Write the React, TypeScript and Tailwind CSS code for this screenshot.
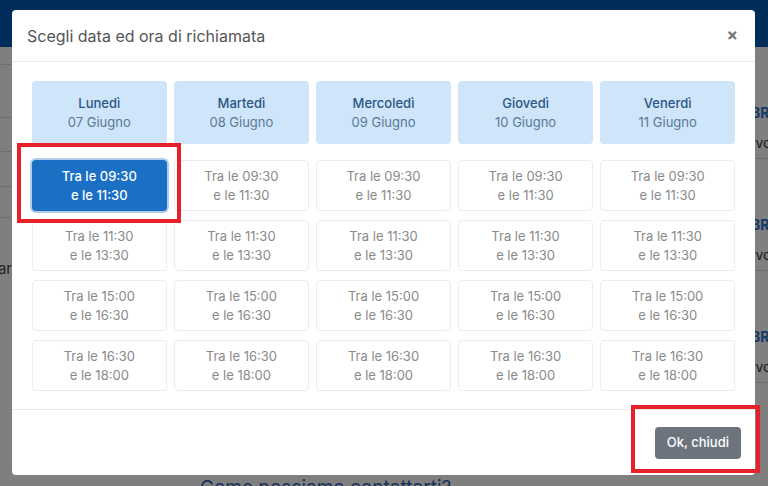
import React from "react";

const days = [
  { name: "Lunedì", date: "07 Giugno" },
  { name: "Martedì", date: "08 Giugno" },
  { name: "Mercoledì", date: "09 Giugno" },
  { name: "Giovedì", date: "10 Giugno" },
  { name: "Venerdì", date: "11 Giugno" },
];

const slots = [
  ["09:30", "11:30"],
  ["11:30", "13:30"],
  ["15:00", "16:30"],
  ["16:30", "18:00"],
];

function Slot({ from, to, selected }: { from: string; to: string; selected?: boolean }) {
  if (selected) {
    return (
      <button className="h-[51px] rounded bg-[#1b6fc4] text-[13px] leading-[19px] font-medium text-white ring-2 ring-[#1b6fc4]/35">
        Tra le {from}
        <br />e le {to}
      </button>
    );
  }
  return (
    <button className="h-[51px] rounded border border-[#ececec] bg-white text-[13px] leading-[19px] text-[#8a8a8a]">
      Tra le {from}
      <br />e le {to}
    </button>
  );
}

export default function App() {
  return (
    <div
      className="relative h-[486px] w-[768px] overflow-hidden bg-white"
      style={{ fontFamily: "Inter, 'Noto Sans', sans-serif" }}
    >
      {/* pagina sotto il modale */}
      <div className="h-[47px] bg-[#035bb4]" />
      <div className="flex">
        <div className="w-[12px] shrink-0 overflow-hidden">
          <div className="h-[18px] border-b border-[#dedede]" />
          <div className="h-[53px] border-b border-[#dedede]" />
          <div className="h-[34px] border-b border-[#dedede]" />
          <div className="h-[35px] border-b border-[#dedede]" />
          <div className="h-[31px] border-b border-[#dedede]" />
          <div className="flex h-[62px] items-end justify-end text-[15px] text-[#444]">ar</div>
        </div>
        <div className="flex-1" />
        <div className="w-[13px] shrink-0 overflow-hidden whitespace-nowrap text-[14px]">
          {[0, 1, 2].map((i) => (
            <div key={i} className="h-[112px] border-b border-[#dedede] pt-[55px]">
              <div className="-ml-[4px] font-bold text-[#2d74c8]">BRU</div>
              <div className="-ml-[3px] mt-[9px] text-[#333]">ivo</div>
            </div>
          ))}
        </div>
      </div>
      <div className="absolute bottom-[-16px] left-[200px] text-[19px] text-[#2f65b0]">Come possiamo contattarti?</div>

      {/* overlay + modale */}
      <div className="absolute inset-0 bg-black/50 px-3 pt-[10px]">
        <div className="w-[743px] overflow-hidden rounded bg-white">
          <div className="flex h-[52px] items-center justify-between border-b border-[#ececec] pl-[15px] pr-[17px]">
            <h2 className="text-[16px] text-[#555]">Scegli data ed ora di richiamata</h2>
            <span className="text-[17px] font-bold leading-none text-[#777]">×</span>
          </div>

          <div className="border-b border-[#ececec] px-5 pb-[18px] pt-[19px]">
            <div className="grid grid-cols-5 gap-x-[7.5px]">
              {days.map((d) => (
                <div
                  key={d.name}
                  className="flex h-[63px] flex-col items-center justify-center rounded bg-[#cfe5f9] text-[13px] leading-[19px]"
                >
                  <span className="font-medium text-[#2b5685]">{d.name}</span>
                  <span className="text-[#5b7898]">{d.date}</span>
                </div>
              ))}
            </div>
            <div className="mt-4 grid grid-cols-5 gap-x-[7.5px] gap-y-[9px]">
              {slots.map(([from, to], r) =>
                days.map((d, c) => <Slot key={d.name + r} from={from} to={to} selected={r === 0 && c === 0} />)
              )}
            </div>
          </div>

          <div className="flex h-[65px] items-center justify-end pr-[14px]">
            <button className="h-8 rounded bg-[#6c757d] px-3 text-[13px] font-medium text-white">Ok, chiudi</button>
          </div>
        </div>
      </div>

      {/* annotazioni rosse */}
      <div className="absolute left-[17px] top-[143px] h-[80px] w-[164px] border-4 border-[#e8202a]" />
      <div className="absolute left-[631px] top-[405px] h-[68px] w-[129px] border-4 border-[#e8202a]" />
    </div>
  );
}
